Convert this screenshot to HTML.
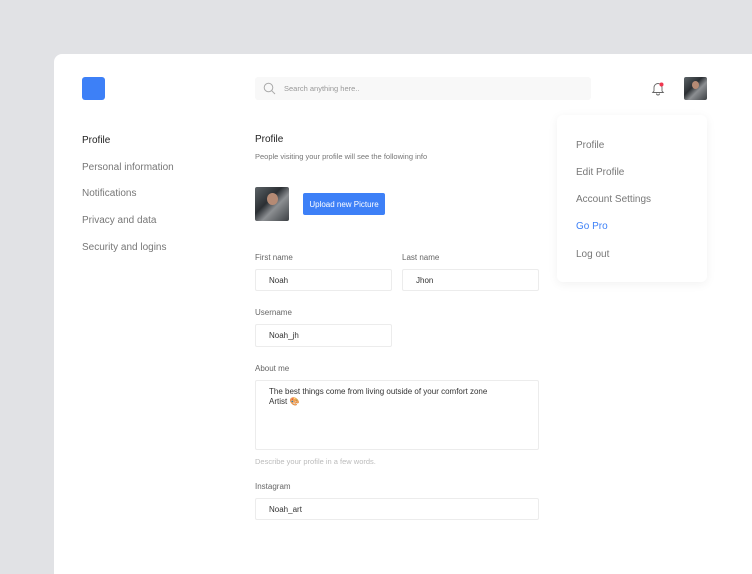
<!DOCTYPE html>
<html><head><meta charset="utf-8"><style>
*{box-sizing:border-box;margin:0;padding:0}
body{width:752px;height:564px;background:#e1e2e5;font-family:"Liberation Sans",sans-serif;position:relative;overflow:hidden}
.card{position:absolute;left:54px;top:54px;width:710px;height:520px;background:#fff;border-radius:8px 0 0 0}
.a{position:absolute;white-space:nowrap}
.nav{left:82px;font-size:10px;color:#777}
.lbl{left:255px;font-size:8px;color:#666}
.inp{position:absolute;border:1px solid #ececec;border-radius:2px;background:#fff;font-size:8px;color:#333;padding-left:13px;display:flex;align-items:center}
.dd{font-size:10px;color:#777;left:576px}
.av{position:absolute;border-radius:2px;background:linear-gradient(135deg,#5d6468,#2b2f33 40%,#8c8f92 60%,#3c4044);overflow:hidden}
.av:after{content:"";position:absolute;left:35%;top:18%;width:32%;height:36%;border-radius:50%;background:#b58a74}
</style></head><body>
<div class="card"></div>
<div class="a" style="left:82px;top:77px;width:23px;height:23px;background:#3d80f7;border-radius:3px"></div>
<div class="a" style="left:255px;top:77px;width:336px;height:23px;background:#f8f8f8;border-radius:3px"></div>
<svg class="a" style="left:263px;top:82px" width="13" height="13" viewBox="0 0 13 13"><circle cx="5.5" cy="5.5" r="4.3" fill="none" stroke="#aaa" stroke-width="1"/><line x1="8.7" y1="8.7" x2="12" y2="12" stroke="#aaa"/></svg>
<div class="a" style="left:284px;top:84px;font-size:7.5px;color:#999">Search anything here..</div>
<svg class="a" style="left:651px;top:81px" width="14" height="15" viewBox="0 0 14 15"><path d="M3 10V6.5a4 4 0 0 1 8 0V10l1.3 1.5H1.7z M5.5 12.5a1.5 1.5 0 0 0 3 0" fill="none" stroke="#666" stroke-width="0.9"/><circle cx="10.5" cy="3.5" r="2" fill="#f0364f"/></svg>
<div class="av" style="left:684px;top:77px;width:23px;height:23px"></div>
<div class="a nav" style="top:135px;color:#222">Profile</div>
<div class="a nav" style="top:162px">Personal information</div>
<div class="a nav" style="top:188px">Notifications</div>
<div class="a nav" style="top:215px">Privacy and data</div>
<div class="a nav" style="top:242px">Security and logins</div>
<div class="a" style="left:255px;top:134px;font-size:10px;color:#222">Profile</div>
<div class="a" style="left:255px;top:152px;font-size:7.5px;color:#777">People visiting your profile will see the following info</div>
<div class="av" style="left:255px;top:187px;width:34px;height:34px"></div>
<div class="a" style="left:303px;top:193px;width:82px;height:22px;background:#3d80f7;border-radius:2px;color:#fff;font-size:8px;display:flex;align-items:center;justify-content:center">Upload new Picture</div>
<div class="a lbl" style="top:253px">First name</div>
<div class="a lbl" style="top:253px;left:402px">Last name</div>
<div class="inp" style="left:255px;top:269px;width:137px;height:22px">Noah</div>
<div class="inp" style="left:402px;top:269px;width:137px;height:22px">Jhon</div>
<div class="a lbl" style="top:308px">Username</div>
<div class="inp" style="left:255px;top:324px;width:137px;height:23px">Noah_jh</div>
<div class="a lbl" style="top:364px">About me</div>
<div class="inp" style="left:255px;top:380px;width:284px;height:70px;display:block;padding-top:6px;line-height:10px">The best things come from living outside of your comfort zone<br>Artist 🎨</div>
<div class="a" style="left:255px;top:457px;font-size:7.5px;color:#bbb">Describe your profile in a few words.</div>
<div class="a lbl" style="top:482px">Instagram</div>
<div class="inp" style="left:255px;top:498px;width:284px;height:22px">Noah_art</div>
<div class="a" style="left:557px;top:115px;width:150px;height:167px;background:#fff;border-radius:6px;box-shadow:0 2px 10px rgba(0,0,0,0.06)"></div>
<div class="a dd" style="top:140px">Profile</div>
<div class="a dd" style="top:167px">Edit Profile</div>
<div class="a dd" style="top:194px">Account Settings</div>
<div class="a dd" style="top:221px;color:#3d80f7">Go Pro</div>
<div class="a dd" style="top:249px">Log out</div>
</body></html>
